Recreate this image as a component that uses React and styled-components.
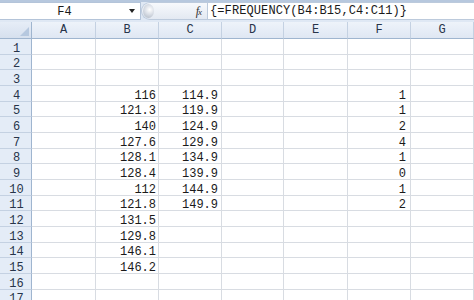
import React from "react";
import styled, { createGlobalStyle } from "styled-components";

const GlobalStyle = createGlobalStyle`
  html, body {
    margin: 0;
    padding: 0;
    background: #ffffff;
    overflow: hidden;
  }
`;

const Window = styled.div`
  width: 474px;
  height: 300px;
  overflow: hidden;
  background: #dfe8f4;
  border-top: 2px solid #b7c8de;
  box-sizing: border-box;
  font-family: "Liberation Mono", "DejaVu Sans Mono", monospace;
  font-size: 12px;
  color: #1a1a1a;
`;

const FormulaBar = styled.div`
  display: flex;
  height: 18px;
  margin-bottom: 2px;
`;

const NameBox = styled.div`
  width: 141px;
  display: flex;
  align-items: center;
  background: #ffffff;
  border: 1px solid #b4c4d9;
  border-left: none;
  box-sizing: border-box;
`;

const NameText = styled.span`
  flex: 1;
  text-align: center;
  padding-top: 1px;
`;

const DropArrow = styled.span`
  width: 0;
  height: 0;
  margin-right: 5px;
  border-left: 3px solid transparent;
  border-right: 3px solid transparent;
  border-top: 4px solid #222;
`;

const Grip = styled.div`
  width: 66px;
  display: flex;
  align-items: center;
  justify-content: space-between;
  background: linear-gradient(#f7f9fc, #e3e9f2);
  border: 1px solid #bccadc;
  border-right: none;
  border-radius: 9px 0 0 9px;
  box-sizing: border-box;
`;

const Dimple = styled.span`
  width: 11px;
  height: 14px;
  margin-left: 1px;
  border-radius: 50%;
  background: radial-gradient(circle at 60% 40%, #ffffff 0%, #d9dee6 45%, #aab3c0 100%);
`;

const Fx = styled.span`
  font-family: "Liberation Serif", serif;
  font-style: italic;
  font-size: 12px;
  color: #333;
  margin-right: 6px;
  padding-top: 1px;
  letter-spacing: -1px;

  small {
    font-size: 9px;
  }
`;

const FormulaInput = styled.div`
  flex: 1;
  display: flex;
  align-items: center;
  padding-left: 2px;
  background: #ffffff;
  border: 1px solid #bccadc;
  border-right: none;
  box-sizing: border-box;
  white-space: nowrap;
  letter-spacing: 0.1px;
`;

const Sheet = styled.div`
  display: grid;
  grid-template-columns: 32px 64px 63px 63px 62px 64px 63px 63px;
  grid-template-rows: 17px;
  grid-auto-rows: 15.67px;
  background: #ffffff;
`;

const Corner = styled.div`
  position: relative;
  background: linear-gradient(#e6edf7, #d6e0ee);
  border-right: 1px solid #9fb5cf;
  border-bottom: 1px solid #9fb5cf;
  box-sizing: border-box;

  &::after {
    content: "";
    position: absolute;
    right: 2px;
    bottom: 2px;
    width: 0;
    height: 0;
    border-left: 9px solid transparent;
    border-bottom: 9px solid #b6c8df;
  }
`;

const ColHead = styled.div`
  display: flex;
  align-items: flex-end;
  justify-content: center;
  padding-bottom: 2px;
  line-height: 12px;
  background: linear-gradient(#eef3fa, #dfe7f3);
  border-right: 1px solid #c4d1e2;
  border-bottom: 1px solid #9fb5cf;
  box-sizing: border-box;
  color: #27344a;
`;

const RowHead = styled.div`
  display: flex;
  align-items: flex-end;
  justify-content: center;
  padding-left: 2px;
  line-height: 10px;
  background: #e4ecf7;
  border-right: 1px solid #9fb5cf;
  border-bottom: 1px solid #c4d1e2;
  box-sizing: border-box;
  color: #27344a;
`;

const Cell = styled.div`
  display: flex;
  align-items: flex-end;
  justify-content: flex-end;
  padding-right: ${(p) => p.$pad}px;
  line-height: 10px;
  border-right: 1px solid #d8dce2;
  border-bottom: 1px solid #d8dce2;
  box-sizing: border-box;
  white-space: nowrap;
`;

const COLS = ["A", "B", "C", "D", "E", "F", "G"];

const DATA = {
  B: [null, null, null, "116", "121.3", "140", "127.6", "128.1", "128.4", "112", "121.8", "131.5", "129.8", "146.1", "146.2"],
  C: [null, null, null, "114.9", "119.9", "124.9", "129.9", "134.9", "139.9", "144.9", "149.9"],
  F: [null, null, null, "1", "1", "2", "4", "1", "0", "1", "2"],
};

const PAD = { A: 2, B: 2, C: 3, D: 2, E: 2, F: 4, G: 2 };

export default function App() {
  const rows = [];
  for (let r = 1; r <= 17; r++) {
    rows.push(<RowHead key={"h" + r}>{r}</RowHead>);
    COLS.forEach((c) => {
      const v = DATA[c] ? DATA[c][r - 1] : null;
      rows.push(
        <Cell key={c + r} $pad={PAD[c]}>
          {v}
        </Cell>
      );
    });
  }

  return (
    <Window>
      <GlobalStyle />
      <FormulaBar>
        <NameBox>
          <NameText>F4</NameText>
          <DropArrow />
        </NameBox>
        <Grip>
          <Dimple />
          <Fx>
            f<small>x</small>
          </Fx>
        </Grip>
        <FormulaInput>{"{=FREQUENCY(B4:B15,C4:C11)}"}</FormulaInput>
      </FormulaBar>
      <Sheet>
        <Corner />
        {COLS.map((c) => (
          <ColHead key={c}>{c}</ColHead>
        ))}
        {rows}
      </Sheet>
    </Window>
  );
}
